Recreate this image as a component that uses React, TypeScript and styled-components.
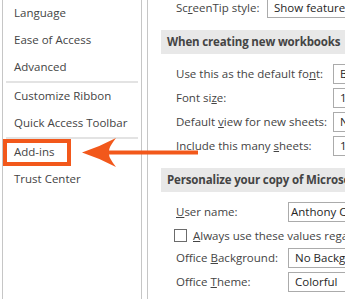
import styled, { createGlobalStyle } from 'styled-components';

const GlobalStyle = createGlobalStyle`
  html, body {
    margin: 0;
    padding: 0;
    background: #ffffff;
  }
  body {
    font-family: 'Open Sans', 'Noto Sans', sans-serif;
    font-size: 11.5px;
    color: #444444;
  }
`;

const ORANGE = '#f2581b';

type NavItem = { label: string; highlighted?: boolean };

const navGroups: NavItem[][] = [
  [{ label: 'Language' }, { label: 'Ease of Access' }, { label: 'Advanced' }],
  [{ label: 'Customize Ribbon' }, { label: 'Quick Access Toolbar' }],
  [{ label: 'Add-ins', highlighted: true }, { label: 'Trust Center' }],
];

const Key = ({ children }: { children: string }) => <u>{children}</u>;

const App = () => {
  return (
    <>
      <GlobalStyle />
      <Window>
        <Sidebar>
          {navGroups.map((group, gi) => (
            <NavGroup key={gi} $last={gi === navGroups.length - 1}>
              {group.map((item) => (
                <NavEntry key={item.label} $highlighted={item.highlighted}>
                  {item.label}
                </NavEntry>
              ))}
            </NavGroup>
          ))}
        </Sidebar>
        <Pane>
          <Section $labelWidth={91} $top={-4}>
            <Row>
              <Label>
                Sc<Key>r</Key>eenTip style:
              </Label>
              <Dropdown>Show feature</Dropdown>
            </Row>
          </Section>

          <Header>When creating new workbooks</Header>
          <Section $labelWidth={157}>
            <Row>
              <Label>
                Use this as the default fo<Key>n</Key>t:
              </Label>
              <Dropdown>B</Dropdown>
            </Row>
            <Row>
              <Label>
                Font si<Key>z</Key>e:
              </Label>
              <Dropdown>1</Dropdown>
            </Row>
            <Row>
              <Label>
                Default <Key>v</Key>iew for new sheets:
              </Label>
              <Dropdown>N</Dropdown>
            </Row>
            <Row>
              <Label>
                Include this many <Key>s</Key>heets:
              </Label>
              <Dropdown>1</Dropdown>
            </Row>
          </Section>

          <Header>Personalize your copy of Microso</Header>
          <Section $labelWidth={112}>
            <Row>
              <Label>
                <Key>U</Key>ser name:
              </Label>
              <TextField>Anthony C</TextField>
            </Row>
            <CheckRow>
              <CheckBox />
              <span>
                <Key>A</Key>lways use these values regar
              </span>
            </CheckRow>
            <Row>
              <Label>
                Office <Key>B</Key>ackground:
              </Label>
              <Dropdown>No Backg</Dropdown>
            </Row>
            <Row>
              <Label>
                Office <Key>T</Key>heme:
              </Label>
              <Dropdown>Colorful</Dropdown>
            </Row>
          </Section>
        </Pane>

        <Arrow width="116" height="32" viewBox="0 0 116 32">
          <path
            d="M0 15.5 Q17 10 34 1 Q27 10 27 13.5 L116 13.5 L116 17.5 L27 17.5 Q27 21 34 30 Q17 21 0 15.5 Z"
            fill={ORANGE}
          />
        </Arrow>
      </Window>
    </>
  );
};

const Window = styled.div`
  position: relative;
  display: flex;
  width: 345px;
  height: 299px;
  overflow: hidden;
  background: #ffffff;
`;

const Sidebar = styled.nav`
  flex: 0 0 138px;
  margin-left: 2px;
  border-left: 1px solid #c6c6c6;
  border-right: 1px solid #c6c6c6;
`;

const NavGroup = styled.div<{ $last?: boolean }>`
  margin: 0 3px;
  border-bottom: ${({ $last }) => ($last ? 'none' : '2px solid #e3e3e3')};
`;

const NavEntry = styled.div<{ $highlighted?: boolean }>`
  box-sizing: border-box;
  height: 27px;
  line-height: 26px;
  padding-left: 8px;
  white-space: nowrap;
  color: #444444;
  ${({ $highlighted }) =>
    $highlighted &&
    `
    width: 68px;
    margin-left: -3px;
    padding-left: 7px;
    line-height: 18px;
    border: 4px solid ${ORANGE};
  `}
`;

const Pane = styled.main`
  flex: 1;
  margin-left: 5px;
  border-left: 1px solid #c6c6c6;
  min-width: 0;
  overflow: hidden;
`;

const Section = styled.div<{ $labelWidth: number; $top?: number }>`
  display: grid;
  grid-template-columns: ${({ $labelWidth }) => $labelWidth}px 1fr;
  margin-top: ${({ $top }) => $top ?? 8}px;
  padding-left: 28px;
  margin-bottom: 10px;
`;

const Row = styled.div`
  display: contents;
`;

const Label = styled.div`
  height: 24px;
  line-height: 24px;
  white-space: nowrap;
  color: #444444;
`;

const Field = styled.div`
  box-sizing: border-box;
  height: 20px;
  margin: 2px 0;
  line-height: 18px;
  border: 1px solid #ababab;
  border-right: none;
  white-space: nowrap;
  overflow: hidden;
  color: #262626;
  background: #ffffff;
`;

const Dropdown = styled(Field)`
  padding-left: 6px;
`;

const TextField = styled(Field)`
  padding-left: 2px;
`;

const CheckRow = styled.div`
  grid-column: 1 / -1;
  display: flex;
  align-items: center;
  gap: 6px;
  height: 22px;
  margin-left: -2px;
  white-space: nowrap;
  overflow: hidden;
  color: #444444;
`;

const CheckBox = styled.span`
  flex: 0 0 auto;
  box-sizing: border-box;
  width: 13px;
  height: 13px;
  border: 1px solid #6b6b6b;
  background: #ffffff;
`;

const Header = styled.div`
  height: 24px;
  line-height: 24px;
  margin-left: 13px;
  padding-left: 6px;
  background: #e8e8e8;
  font-weight: 700;
  letter-spacing: -0.15px;
  color: #444444;
  white-space: nowrap;
  overflow: hidden;
`;

const Arrow = styled.svg`
  position: absolute;
  left: 82px;
  top: 137px;
`;

export default App;
